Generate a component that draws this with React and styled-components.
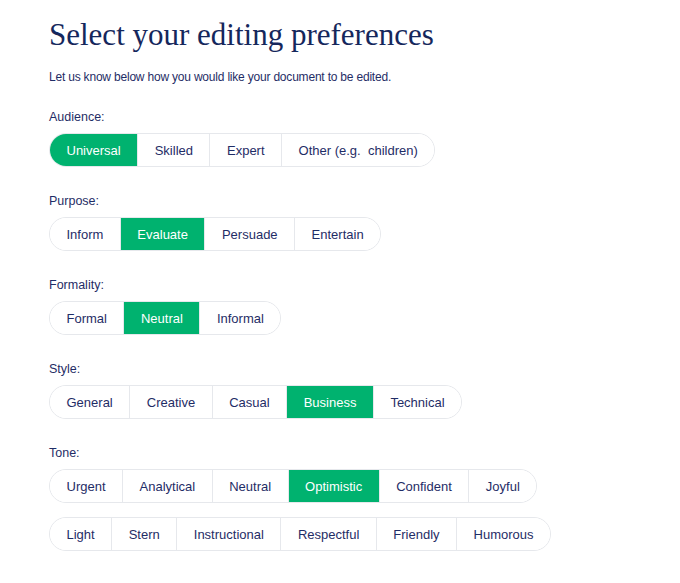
import React, { useState } from "react";
import styled, { createGlobalStyle } from "styled-components";

const GlobalStyle = createGlobalStyle`
  body {
    margin: 0;
    background: #ffffff;
    font-family: "Liberation Sans", Arial, sans-serif;
  }
`;

const sections = [
  { label: "Audience:", rows: [["Universal", "Skilled", "Expert", "Other (e.g.  children)"]], picked: "Universal" },
  { label: "Purpose:", rows: [["Inform", "Evaluate", "Persuade", "Entertain"]], picked: "Evaluate" },
  { label: "Formality:", rows: [["Formal", "Neutral", "Informal"]], picked: "Neutral" },
  { label: "Style:", rows: [["General", "Creative", "Casual", "Business", "Technical"]], picked: "Business" },
  {
    label: "Tone:",
    rows: [
      ["Urgent", "Analytical", "Neutral", "Optimistic", "Confident", "Joyful"],
      ["Light", "Stern", "Instructional", "Respectful", "Friendly", "Humorous"],
    ],
    picked: "Optimistic",
  },
];

const App = () => {
  const [picks, setPicks] = useState(sections.map((s) => s.picked));

  const pick = (i, value) => {
    const next = [...picks];
    next[i] = value;
    setPicks(next);
  };

  return (
    <Page>
      <GlobalStyle />
      <Title>Select your editing preferences</Title>
      <Intro>Let us know below how you would like your document to be edited.</Intro>
      {sections.map((section, i) => (
        <Section key={section.label}>
          <Label>{section.label}</Label>
          <Rows>
            {section.rows.map((row, r) => (
              <Group key={r}>
                {row.map((option) => (
                  <Option
                    key={option}
                    $active={picks[i] === option}
                    onClick={() => pick(i, option)}
                  >
                    {option}
                  </Option>
                ))}
              </Group>
            ))}
          </Rows>
        </Section>
      ))}
    </Page>
  );
};

//styling
const Page = styled.div`
  padding: 16px 0 0 49px;
  color: #1f2d66;
`;
const Title = styled.h1`
  margin: 0;
  font-family: "Liberation Serif", "Times New Roman", serif;
  font-weight: 400;
  font-size: 31px;
  line-height: 38px;
  color: #15275c;
`;
const Intro = styled.p`
  margin: 15px 0 0;
  font-size: 12px;
  letter-spacing: -0.2px;
  line-height: 16px;
`;
const Section = styled.div`
  margin-top: 24px;
  & + & {
    margin-top: 26px;
  }
`;
const Label = styled.div`
  font-size: 12.5px;
  line-height: 16px;
  margin-bottom: 8px;
`;
const Rows = styled.div`
  display: flex;
  flex-direction: column;
  align-items: flex-start;
  gap: 14px;
`;
const Group = styled.div`
  display: inline-flex;
  height: 34px;
  border: 1px solid #e6e8ec;
  border-radius: 999px;
  overflow: hidden;
  box-sizing: border-box;
`;
const Option = styled.button`
  border: none;
  border-left: 1px solid #e6e8ec;
  margin: 0;
  padding: 0 16.5px;
  font-family: inherit;
  font-size: 13px;
  cursor: pointer;
  white-space: pre;
  background: ${(p) => (p.$active ? "#00b26f" : "#ffffff")};
  color: ${(p) => (p.$active ? "#ffffff" : "#1f2d66")};
  &:first-child {
    border-left: none;
  }
`;

export default App;
